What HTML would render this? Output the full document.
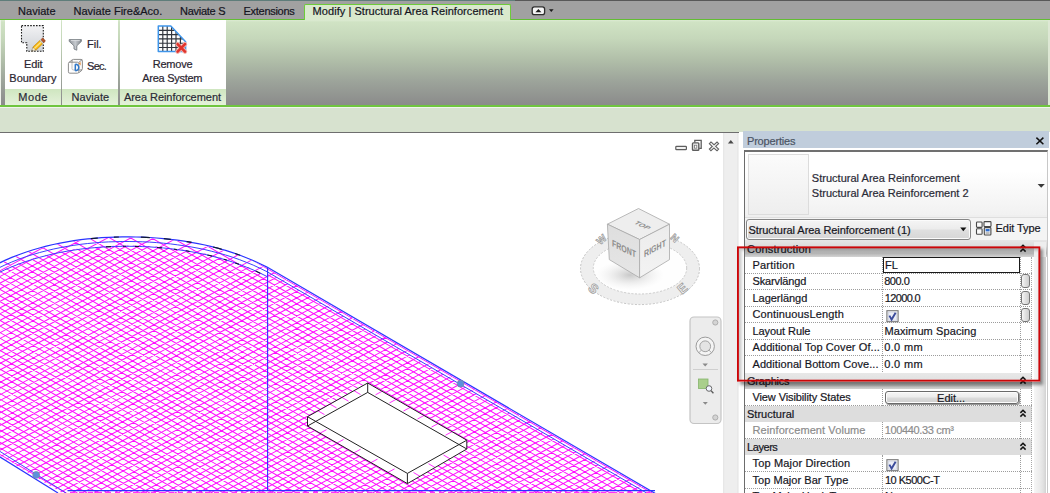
<!DOCTYPE html>
<html><head><meta charset="utf-8"><title>Revit</title>
<style>
*{box-sizing:border-box;margin:0;padding:0}
html,body{width:1050px;height:493px;overflow:hidden;background:#fff}
body{position:relative;font-family:"Liberation Sans",sans-serif;font-size:11px;color:#1e1e2a}
.a{position:absolute}
.t{position:absolute;white-space:nowrap;line-height:14px;height:14px;-webkit-text-stroke:0.2px currentColor}
/* ribbon */
#topline{left:0;top:0;width:1050px;height:1px;background:#5f7d7a}
#tabbar{left:0;top:1px;width:1050px;height:18px;background:#a1a1a1}
#gline{left:0;top:19px;width:1050px;height:1px;background:#62bd33}
#ribbon{left:0;top:20px;width:1050px;height:86px;background:linear-gradient(#dcead2 0,#d0e3c4 2px,#c5d7ba 22%,#b1bfa9 46%,#9ca39a 72%,#8a8a8a 100%)}
#gline2{left:0;top:105px;width:1050px;height:1.5px;background:#6fc53f}
#strip{left:0;top:106.5px;width:1050px;height:25px;background:linear-gradient(#f0f4ec 0,#f0f4ec 1.4px,#d7e2cf 1.4px)}
#dline{left:0;top:131.5px;width:738.6px;height:1.5px;background:#6e6e6e}
.panel{position:absolute;top:20px;height:85px;background:#fff}
.plabel{position:absolute;left:0;right:0;top:69px;height:16px;background:linear-gradient(#cfe6c0,#e4f1da);text-align:center;line-height:15px;color:#2b2b3a}
.tab{position:absolute;top:3px;line-height:14px;white-space:nowrap;color:#15151f}
#acttab{left:304.2px;top:3.5px;width:207.3px;height:16.5px;background:#d9e9cd;border:1px solid #6ecb3a;border-bottom:none;border-radius:2px 2px 0 0}
/* props */
#ptitle{left:743px;top:131.2px;width:306px;height:16.6px;background:#c0cddc}
#pbody{left:743.9px;top:149.5px;width:304.1px;height:343px;background:#fff;border-top:2px solid #707070;border-right:1.5px solid #c8c8c8}
.hdr{position:absolute;left:745px;width:286px;height:16.4px;background:#dcdcdc}
.rowl{position:absolute;left:745px;width:286px;height:0;border-top:1px dotted #b0b0b0}
.lab{left:753px}
.val{left:885px}
.sec{left:748px}
.chev{position:absolute;left:1020px;width:8px;height:9px}
</style></head><body>
<!-- ribbon -->
<div class="a" id="tabbar"></div>
<div class="a" id="topline"></div>
<div class="a" id="ribbon"></div>
<div class="a" id="gline"></div>
<div class="a" id="acttab"></div>
<div class="a" style="left:0;top:20px;width:1.2px;height:86px;background:#eef2ea"></div>
<div class="panel" style="left:4.6px;width:56px"><div class="plabel"></div></div>
<div class="panel" style="left:62.2px;width:56.3px"><div class="plabel"></div></div>
<div class="panel" style="left:119.6px;width:106px"><div class="plabel"></div></div>
<div class="a" id="rstrip" style="left:1048.3px;top:20px;width:1.7px;height:86px;background:#dde8d4"></div>
<div class="a" style="left:515px;top:0;width:535px;height:1.3px;background:#585858"></div>
<div class="a" id="gline2"></div>
<div class="a" id="strip"></div>
<div class="a" id="dline"></div>
<div class="t" style="left:18.0px;top:3.8px;font-size:11px;letter-spacing:0.05px;color:#14141e">Naviate</div>
<div class="t" style="left:73.5px;top:3.8px;font-size:11px;letter-spacing:0.01px;color:#14141e">Naviate Fire&amp;Aco.</div>
<div class="t" style="left:180.1px;top:3.8px;font-size:11px;letter-spacing:-0.28px;color:#14141e">Naviate S</div>
<div class="t" style="left:243.5px;top:3.8px;font-size:11px;letter-spacing:-0.28px;color:#14141e">Extensions</div>
<div class="t" style="left:312.6px;top:4.0px;font-size:11px;letter-spacing:0.05px;color:#14141e">Modify | Structural Area Reinforcement</div>
<div class="t" style="left:23.9px;top:56.8px;font-size:11px;letter-spacing:-0.09px;color:#2a2530">Edit</div>
<div class="t" style="left:9.3px;top:70.8px;font-size:11px;letter-spacing:0.00px;color:#2a2530">Boundary</div>
<div class="t" style="left:18.2px;top:90.0px;font-size:11px;letter-spacing:0.59px;color:#2a2a36">Mode</div>
<div class="t" style="left:87.1px;top:37.4px;font-size:11px;letter-spacing:-0.06px;color:#2a2530">Fil.</div>
<div class="t" style="left:87.1px;top:59.0px;font-size:11px;letter-spacing:-0.74px;color:#2a2530">Sec.</div>
<div class="t" style="left:71.5px;top:90.0px;font-size:11px;letter-spacing:0.07px;color:#2a2a36">Naviate</div>
<div class="t" style="left:152.7px;top:57.1px;font-size:11px;letter-spacing:-0.19px;color:#2a2530">Remove</div>
<div class="t" style="left:142.2px;top:70.7px;font-size:11px;letter-spacing:-0.27px;color:#2a2530">Area System</div>
<div class="t" style="left:123.9px;top:89.9px;font-size:11px;letter-spacing:-0.04px;color:#2a2a36">Area Reinforcement</div>
<svg class="a" style="left:0;top:0" width="560" height="110" viewBox="0 0 560 110">
<defs>
<linearGradient id="eb" x1="0" y1="0" x2="0" y2="1"><stop offset="0" stop-color="#f2f2f4"/><stop offset="1" stop-color="#cfd3d8"/></linearGradient>
<linearGradient id="fn" x1="0" y1="0" x2="1" y2="0"><stop offset="0" stop-color="#8b9096"/><stop offset="0.5" stop-color="#c6cacf"/><stop offset="1" stop-color="#7e848a"/></linearGradient>
<clipPath id="gridc"><path d="M158.3 26.1H170.8L185.6 41.8V51.4H158.3Z"/></clipPath>
</defs>
<!-- Edit boundary -->
<path d="M21.5 25.6H43.3V51.3H26.8V42.7H21.5Z" fill="url(#eb)" stroke="#1c1c1c" stroke-width="1.1" stroke-dasharray="1.6 1.3"/>
<g transform="translate(31.4 51.5) rotate(-43.5)">
<path d="M0 0L4.2 -2.2V2.2Z" fill="#f3e9d2" stroke="#8a7a5a" stroke-width="0.5"/>
<path d="M0 0L1.6 -0.85V0.85Z" fill="#444"/>
<rect x="4.2" y="-2.2" width="9.4" height="4.4" fill="#f6b511" stroke="#b87a08" stroke-width="0.5"/>
<rect x="4.2" y="-0.9" width="9.4" height="1.5" fill="#ffe27a"/>
<rect x="13.6" y="-2.2" width="1.4" height="4.4" fill="#c9c9c9"/>
<rect x="15" y="-2.2" width="2.6" height="4.4" rx="0.9" fill="#b8562a" stroke="#7c3616" stroke-width="0.4"/>
</g>
<!-- funnel -->
<path d="M69.2 39.6H81.4V41.4L76.8 45.8V50.2L74 49V45.8L69.2 41.4Z" fill="url(#fn)" stroke="#7d8288" stroke-width="0.9" stroke-linejoin="round"/>
<path d="M70.8 40.6H79.8" stroke="#dfe2e5" stroke-width="0.9"/>
<!-- section box -->
<g fill="none" stroke="#8c8c8c" stroke-width="1">
<rect x="72" y="59.4" width="10.4" height="10.6" rx="1.4" fill="#fafafa"/>
<rect x="68.4" y="62.2" width="10.4" height="11" rx="1.4" fill="#fdfdfd" fill-opacity="0.45"/>
<path d="M68.8 62.6l3.4-2.8M78.8 62.4l3.4-2.8M78.8 72.8l3.4-2.8"/>
</g>
<path d="M75.3 64.2v6.6M75.3 64.4c4.6-0.6 4.6 6.8 0 6.2" stroke="#2f77c8" stroke-width="1.5" fill="none"/>
<path d="M78.6 63.2l2-1.2v3.6z" fill="#e58a3a"/>
<!-- remove area system -->
<path d="M158.3 26.1H170.8L185.6 41.8V51.4H158.3Z" fill="#fdfdfd"/>
<g clip-path="url(#gridc)" stroke="#30343c" stroke-width="1.15">
<path d="M162.8 25V52M167.2 25V52M171.6 25V52M176 25V52M180.4 25V52M157 30.3H187M157 34.6H187M157 38.9H187M157 43.2H187M157 47.5H187"/>
</g>
<path d="M158.3 26.1H170.8L185.6 41.8V51.4H158.3Z" fill="none" stroke="#3f95ea" stroke-width="1.5" stroke-linejoin="round"/>
<path d="M177.6 44.2l7.4 7.4M185 44.2l-7.4 7.4" stroke="#f4b0a8" stroke-width="4.4" stroke-linecap="round"/>
<path d="M177.6 44.2l7.4 7.4M185 44.2l-7.4 7.4" stroke="#e0332c" stroke-width="2.6" stroke-linecap="round"/>
<!-- tab expander icon -->
<rect x="532.2" y="6.8" width="12.4" height="7.8" rx="2.2" fill="#f4f4f4" stroke="#2e2e2e" stroke-width="1.3"/>
<path d="M535.4 12.2l3-3.2 3 3.2z" fill="#1a1a1a"/>
<path d="M549 9.2h4.6l-2.3 2.8z" fill="#1a1a1a"/>
</svg>

<!-- canvas -->
<svg class="a" style="left:0;top:0" width="742" height="493" viewBox="0 0 742 493">
<clipPath id="slabA"><path d="M-2.0 264.5L4.9 261.2L11.8 258.2L18.7 255.5L25.6 253.0L32.5 250.8L39.4 248.8L46.3 247.0L53.2 245.3L60.1 243.9L67.0 242.6L73.9 241.5L80.8 240.5L87.7 239.7L94.6 239.1L101.5 238.5L108.4 238.1L115.3 237.9L122.2 237.7L129.1 237.7L135.9 237.8L142.8 238.0L149.7 238.3L156.6 238.8L163.5 239.4L170.4 240.1L177.3 241.0L184.2 242.0L191.1 243.1L198.0 244.4L204.9 245.8L211.8 247.5L218.7 249.3L225.6 251.2L232.5 253.4L239.4 255.8L246.3 258.5L253.2 261.3L260.1 264.5L267.0 267.9L760.0 555.3L760.0 500.0L62.0 493.0L-2.0 454.6Z"/></clipPath>
<clipPath id="slabB"><path d="M-2.0 272.3L4.9 269.0L11.8 266.0L18.7 263.3L25.6 260.8L32.5 258.6L39.4 256.6L46.3 254.8L53.2 253.1L60.1 251.7L67.0 250.4L73.9 249.3L80.8 248.3L87.7 247.5L94.6 246.9L101.5 246.3L108.4 245.9L115.3 245.7L122.2 245.5L129.1 245.5L135.9 245.6L142.8 245.8L149.7 246.1L156.6 246.6L163.5 247.2L170.4 247.9L177.3 248.8L184.2 249.8L191.1 250.9L198.0 252.2L204.9 253.6L211.8 255.3L218.7 257.1L225.6 259.0L232.5 261.2L239.4 263.6L246.3 266.3L253.2 269.1L260.1 272.3L267.0 275.7L267.0 271.7L760.0 559.1L760.0 500.0L62.0 493.0L-2.0 454.6Z"/></clipPath>
<g clip-path="url(#slabA)"><path d="M-5 -182.8L670 210.7M-5 -170.6L670 222.9M-5 -158.4L670 235.1M-5 -146.2L670 247.3M-5 -134.0L670 259.5M-5 -121.8L670 271.7M-5 -109.6L670 283.9M-5 -97.4L670 296.1M-5 -85.2L670 308.3M-5 -73.0L670 320.5M-5 -60.8L670 332.7M-5 -48.6L670 344.9M-5 -36.4L670 357.1M-5 -24.2L670 369.3M-5 -12.0L670 381.5M-5 0.2L670 393.7M-5 12.4L670 405.9M-5 24.6L670 418.1M-5 36.8L670 430.3M-5 49.0L670 442.5M-5 61.2L670 454.7M-5 73.4L670 466.9M-5 85.6L670 479.1M-5 97.8L670 491.3M-5 110.0L670 503.5M-5 122.2L670 515.7M-5 134.4L670 527.9M-5 146.6L670 540.1M-5 158.8L670 552.3M-5 171.0L670 564.5M-5 183.2L670 576.7M-5 195.4L670 588.9M-5 207.6L670 601.1M-5 219.8L670 613.3M-5 232.0L670 625.5M-5 244.2L670 637.7M-5 256.4L670 649.9M-5 268.6L670 662.1M-5 280.8L670 674.3M-5 293.0L670 686.5M-5 305.2L670 698.7M-5 317.4L670 710.9M-5 329.6L670 723.1M-5 341.8L670 735.3M-5 354.0L670 747.5M-5 366.2L670 759.7M-5 378.4L670 771.9M-5 390.6L670 784.1M-5 402.8L670 796.3M-5 415.0L670 808.5M-5 427.2L670 820.7M-5 439.4L670 832.9M-5 451.6L670 845.1M-5 463.8L670 857.3M-5 476.0L670 869.5M-5 488.2L670 881.7M-5 500.4L670 893.9M-5 211.4L670 -149.8M-5 223.8L670 -137.4M-5 236.2L670 -125.0M-5 248.6L670 -112.6M-5 261.0L670 -100.2M-5 273.4L670 -87.8M-5 285.8L670 -75.4M-5 298.2L670 -63.0M-5 310.6L670 -50.6M-5 323.0L670 -38.2M-5 335.4L670 -25.8M-5 347.8L670 -13.4M-5 360.2L670 -1.0M-5 372.6L670 11.4M-5 385.0L670 23.8M-5 397.4L670 36.2M-5 409.8L670 48.6M-5 422.2L670 61.0M-5 434.6L670 73.4M-5 447.0L670 85.8M-5 459.4L670 98.2M-5 471.8L670 110.6M-5 484.2L670 123.0M-5 496.6L670 135.4M-5 509.0L670 147.8M-5 521.4L670 160.2M-5 533.8L670 172.6M-5 546.2L670 185.0M-5 558.6L670 197.4M-5 571.0L670 209.8M-5 583.4L670 222.2M-5 595.8L670 234.6M-5 608.2L670 247.0M-5 620.6L670 259.4M-5 633.0L670 271.8M-5 645.4L670 284.2M-5 657.8L670 296.6M-5 670.2L670 309.0M-5 682.6L670 321.4M-5 695.0L670 333.8M-5 707.4L670 346.2M-5 719.8L670 358.6M-5 732.2L670 371.0M-5 744.6L670 383.4M-5 757.0L670 395.8M-5 769.4L670 408.2M-5 781.8L670 420.6M-5 794.2L670 433.0M-5 806.6L670 445.4M-5 819.0L670 457.8M-5 831.4L670 470.2M-5 843.8L670 482.6M-5 856.2L670 495.0" stroke="#ff10ff" stroke-width="1.02" fill="none"/></g>
<g clip-path="url(#slabB)"><path d="M-5 -189.3L670 204.3M-5 -177.1L670 216.5M-5 -164.9L670 228.7M-5 -152.7L670 240.9M-5 -140.5L670 253.1M-5 -128.3L670 265.3M-5 -116.1L670 277.5M-5 -103.9L670 289.7M-5 -91.7L670 301.9M-5 -79.5L670 314.1M-5 -67.3L670 326.3M-5 -55.1L670 338.5M-5 -42.9L670 350.7M-5 -30.7L670 362.9M-5 -18.5L670 375.1M-5 -6.3L670 387.3M-5 5.9L670 399.5M-5 18.1L670 411.7M-5 30.3L670 423.9M-5 42.5L670 436.1M-5 54.7L670 448.3M-5 66.9L670 460.5M-5 79.1L670 472.7M-5 91.3L670 484.9M-5 103.5L670 497.1M-5 115.7L670 509.3M-5 127.9L670 521.5M-5 140.1L670 533.7M-5 152.3L670 545.9M-5 164.5L670 558.1M-5 176.7L670 570.3M-5 188.9L670 582.5M-5 201.1L670 594.7M-5 213.3L670 606.9M-5 225.5L670 619.1M-5 237.7L670 631.3M-5 249.9L670 643.5M-5 262.1L670 655.7M-5 274.3L670 667.9M-5 286.5L670 680.1M-5 298.7L670 692.3M-5 310.9L670 704.5M-5 323.1L670 716.7M-5 335.3L670 728.9M-5 347.5L670 741.1M-5 359.7L670 753.3M-5 371.9L670 765.5M-5 384.1L670 777.7M-5 396.3L670 789.9M-5 408.5L670 802.1M-5 420.7L670 814.3M-5 432.9L670 826.5M-5 445.1L670 838.7M-5 457.3L670 850.9M-5 469.5L670 863.1M-5 481.7L670 875.3M-5 493.9L670 887.5M-5 506.1L670 899.7M-5 204.8L670 -156.4M-5 217.2L670 -144.0M-5 229.6L670 -131.6M-5 242.0L670 -119.2M-5 254.4L670 -106.8M-5 266.8L670 -94.4M-5 279.2L670 -82.0M-5 291.6L670 -69.6M-5 304.0L670 -57.2M-5 316.4L670 -44.8M-5 328.8L670 -32.4M-5 341.2L670 -20.0M-5 353.6L670 -7.6M-5 366.0L670 4.8M-5 378.4L670 17.2M-5 390.8L670 29.6M-5 403.2L670 42.0M-5 415.6L670 54.4M-5 428.0L670 66.8M-5 440.4L670 79.2M-5 452.8L670 91.6M-5 465.2L670 104.0M-5 477.6L670 116.4M-5 490.0L670 128.8M-5 502.4L670 141.2M-5 514.8L670 153.6M-5 527.2L670 166.0M-5 539.6L670 178.4M-5 552.0L670 190.8M-5 564.4L670 203.2M-5 576.8L670 215.6M-5 589.2L670 228.0M-5 601.6L670 240.4M-5 614.0L670 252.8M-5 626.4L670 265.2M-5 638.8L670 277.6M-5 651.2L670 290.0M-5 663.6L670 302.4M-5 676.0L670 314.8M-5 688.4L670 327.2M-5 700.8L670 339.6M-5 713.2L670 352.0M-5 725.6L670 364.4M-5 738.0L670 376.8M-5 750.4L670 389.2M-5 762.8L670 401.6M-5 775.2L670 414.0M-5 787.6L670 426.4M-5 800.0L670 438.8M-5 812.4L670 451.2M-5 824.8L670 463.6M-5 837.2L670 476.0M-5 849.6L670 488.4M-5 862.0L670 500.8" stroke="#ff10ff" stroke-width="1.02" fill="none"/></g>
<path d="M-2.0 263.7L4.9 260.4L11.8 257.4L18.7 254.7L25.6 252.2L32.5 250.0L39.4 248.0L46.3 246.2L53.2 244.5L60.1 243.1L67.0 241.8L73.9 240.7L80.8 239.7L87.7 238.9L94.6 238.3L101.5 237.7L108.4 237.3L115.3 237.1L122.2 236.9L129.1 236.9L135.9 237.0L142.8 237.2L149.7 237.5L156.6 238.0L163.5 238.6L170.4 239.3L177.3 240.2L184.2 241.2L191.1 242.3L198.0 243.6L204.9 245.0L211.8 246.7L218.7 248.5L225.6 250.4L232.5 252.6L239.4 255.0L246.3 257.7L253.2 260.5L260.1 263.7L267.0 267.1L760.0 554.5" stroke="#2a34ff" stroke-width="1.2" fill="none"/>
<path d="M-2.0 268.3L4.9 265.0L11.8 262.0L18.7 259.3L25.6 256.8L32.5 254.6L39.4 252.6L46.3 250.8L53.2 249.1L60.1 247.7L67.0 246.4L73.9 245.3L80.8 244.3L87.7 243.5L94.6 242.9L101.5 242.3L108.4 241.9L115.3 241.7L122.2 241.5L129.1 241.5L135.9 241.6L142.8 241.8L149.7 242.1L156.6 242.6L163.5 243.2L170.4 243.9L177.3 244.8L184.2 245.8L191.1 246.9L198.0 248.2L204.9 249.6L211.8 251.3L218.7 253.1L225.6 255.0L232.5 257.2L239.4 259.6L246.3 262.3L253.2 265.1L260.1 268.3L267.0 271.7L760.0 559.1" stroke="#3a40ff" stroke-width="1" fill="none"/>
<path d="M-2.0 273.1L4.9 269.8L11.8 266.8L18.7 264.1L25.6 261.6L32.5 259.4L39.4 257.4L46.3 255.6L53.2 253.9L60.1 252.5L67.0 251.2L73.9 250.1L80.8 249.1L87.7 248.3L94.6 247.7L101.5 247.1L108.4 246.7L115.3 246.5L122.2 246.3L129.1 246.3L135.9 246.4L142.8 246.6L149.7 246.9L156.6 247.4L163.5 248.0L170.4 248.7L177.3 249.6L184.2 250.6L191.1 251.7L198.0 253.0L204.9 254.4L211.8 256.1L218.7 257.9L225.6 259.8L232.5 262.0L239.4 264.4L246.3 267.1L253.2 269.9L260.1 273.1L267.0 276.5" stroke="#3a40ff" stroke-width="1" fill="none"/>
<path d="M80.0 239.8L85.5 239.2L91.0 238.6L96.6 238.1L102.1 237.7L107.6 237.4L113.1 237.1L118.6 237.0L124.1 236.9L129.7 236.9L135.2 237.0L140.7 237.1L146.2 237.4L151.7 237.7L157.2 238.1L162.8 238.5L168.3 239.1L173.8 239.7L179.3 240.4L184.8 241.3L190.3 242.2L195.9 243.2L201.4 244.3L206.9 245.5L212.4 246.8L217.9 248.2L223.4 249.8L229.0 251.5L234.5 253.3L240.0 255.3" stroke="#101a30" stroke-width="1.2" fill="none" stroke-dasharray="7 16 5 22 9 14" stroke-dashoffset="-84"/>
<path d="M100.0 247.2L105.7 246.9L111.4 246.6L117.2 246.4L122.9 246.3L128.6 246.3L134.3 246.4L140.1 246.5L145.8 246.7L151.5 247.1L157.2 247.5L163.0 247.9L168.7 248.5L174.4 249.2L180.1 250.0L185.9 250.8L191.6 251.8L197.3 252.8L203.0 254.0L208.8 255.3L214.5 256.7L220.2 258.3L225.9 259.9L231.7 261.7L237.4 263.7L243.1 265.8L248.8 268.1L254.6 270.5L260.3 273.2L266.0 276.0" stroke="#101a30" stroke-width="1.1" fill="none" stroke-dasharray="5 12 3 9 4 18" stroke-dashoffset="-6"/><!-- left-bottom edges -->
<path d="M-2 455.8L58 493" stroke="#2a34ff" stroke-width="1.2" fill="none"/>
<path d="M-2 450.2L66 493" stroke="#4a40ff" stroke-width="1" fill="none"/>
<!-- bottom line -->
<path d="M67.5 490.6H655" stroke="#2a34ff" stroke-width="1.3" fill="none"/>
<path d="M70 492.4H650" stroke="#ff30ff" stroke-width="1.2" stroke-dasharray="5 4" fill="none"/>
<!-- vertical line -->
<path d="M267.6 267.5V491" stroke="#2a34ff" stroke-width="1.1" fill="none"/>
<!-- hole -->
<polygon points="307.5,416.7 367.7,383 466.8,440.2 466.8,449 407.4,483.6 307.5,426" fill="#fff"/>
<g stroke="#ff30ff" stroke-width="1" fill="none">
<path d="M318.0 410.8l6.5 3.8M330.0 404.1l6.5 3.8M342.0 397.4l6.5 3.8M354.0 390.7l6.5 3.8M382.0 391.3l-6.5 3.5M396.0 399.4l-6.5 3.5M410.0 407.5l-6.5 3.5M424.0 415.5l-6.5 3.5M438.0 423.6l-6.5 3.5M452.0 431.7l-6.5 3.5M320.0 433.2l6.5-3.5M337.0 443.0l6.5-3.5M354.0 452.8l6.5-3.5M371.0 462.6l6.5-3.5M388.0 472.4l6.5-3.5M420.0 476.3l-6.5-3.8M435.0 467.5l-6.5-3.8M450.0 458.8l-6.5-3.8"/>
</g>
<g stroke="#222" stroke-width="1" fill="none" stroke-linejoin="round">
<path d="M307.5 416.7L367.7 383L466.8 440.2L407.4 473.4Z"/>
<path d="M307.5 416.7V426L407.4 483.6L466.8 449V440.2"/>
<path d="M407.4 473.4V483.6"/>
<path d="M367.7 383V392.4L307.5 426M367.7 392.4L466.8 449"/>
</g>
<!-- handles -->
<circle cx="36.2" cy="474.9" r="3.4" fill="#5b90dc" stroke="#7a8aa8" stroke-width="0.8"/>
<circle cx="460.6" cy="383.7" r="3.4" fill="#5b90dc" stroke="#7a8aa8" stroke-width="0.8"/>

<!-- canvas top border & scrollbar -->
<rect x="723" y="133" width="15.6" height="360" fill="#e7e7e7"/>
<rect x="724.4" y="133" width="12.8" height="360" fill="#eeeeee"/>
<path d="M727.9 143.6l2.9-3.6 2.9 3.6z" fill="#4a4a4a"/>
<!-- window controls -->
<g fill="none">
<rect x="675.8" y="146.3" width="10.6" height="3.4" rx="0.8" fill="#f2f2f2" stroke="#5e5e5e" stroke-width="1.2"/>
<path d="M694.8 142.6v-2.2h6.4v8h-2" stroke="#5e5e5e" stroke-width="1.3"/>
<rect x="692.5" y="142.9" width="6.3" height="7.4" rx="0.8" fill="#f4f4f4" stroke="#5e5e5e" stroke-width="1.4"/>
<rect x="694.6" y="145.2" width="2.2" height="3" fill="#fff" stroke="#777" stroke-width="0.8"/>
<path d="M711 143.6l6 5.6M717 143.6l-6 5.6" stroke-width="3.4" stroke="#5e5e5e" stroke-linecap="square"/>
<path d="M711 143.6l6 5.6M717 143.6l-6 5.6" stroke-width="1.3" stroke="#f4f4f4" stroke-linecap="square"/>
</g>
<!-- view cube -->
<defs>
<linearGradient id="cf" x1="0" y1="0" x2="0" y2="1"><stop offset="0" stop-color="#dedede"/><stop offset="1" stop-color="#e6e6e6"/></linearGradient>
<linearGradient id="cr" x1="0" y1="0" x2="0" y2="1"><stop offset="0" stop-color="#ececec"/><stop offset="1" stop-color="#f3f3f3"/></linearGradient>
<radialGradient id="sh" cx="0.5" cy="0.5" r="0.5"><stop offset="0" stop-color="#c8c8c8"/><stop offset="1" stop-color="#ececec" stop-opacity="0"/></radialGradient>
</defs>
<ellipse cx="640" cy="268.6" rx="59.5" ry="36" fill="#eeeeee" stroke="#bdbdbd" stroke-width="0.9" stroke-dasharray="2 1.6"/>
<ellipse cx="640" cy="268" rx="46.7" ry="26" fill="#fefefe" stroke="#c6c6c6" stroke-width="0.9" stroke-dasharray="2 1.6"/>
<ellipse cx="630" cy="275" rx="34" ry="15" fill="url(#sh)"/>
<g font-family="Liberation Sans,sans-serif" font-weight="bold" font-size="12" fill="#f4f4f4" stroke="#9a9a9a" stroke-width="0.7" text-anchor="middle">
<text x="593.5" y="293" transform="rotate(40 593.5 288.5)" font-size="13">S</text>
<text x="682.5" y="293" transform="rotate(-40 682.5 288.5)" font-size="13">E</text>
<text x="601.5" y="243" transform="rotate(-42 601.5 239.5)" font-size="10">W</text>
<text x="674.5" y="241.5" transform="rotate(42 674.5 238.5)" font-size="10">N</text>
</g>
<polygon points="607.4,224.2 638.5,208.5 669.5,224.2 639.6,239.5" fill="#eeeeee" stroke="#a8a8a8" stroke-width="0.8"/>
<polygon points="607.4,224.2 639.6,239.5 639.6,277.8 609.3,259.6" fill="url(#cf)" stroke="#a8a8a8" stroke-width="0.8"/>
<polygon points="639.6,239.5 669.5,224.2 669.5,259.6 639.6,277.8" fill="url(#cr)" stroke="#a8a8a8" stroke-width="0.8"/>
<g font-family="Liberation Sans,sans-serif" font-weight="bold" fill="#8d8d8d" text-anchor="middle">
<text font-size="9.5" transform="matrix(0.74 0.36 0 1 624 252)" x="0" y="0">FRONT</text>
<text font-size="9.5" transform="matrix(0.74 -0.4 0 1 655 251.5)" x="0" y="0">RIGHT</text>
<text font-size="8.5" transform="matrix(0.8 0.38 -0.7 0.42 640.5 226.5)" x="0" y="0">TOP</text>
</g>
<!-- nav bar -->
<rect x="690" y="317" width="31" height="106.5" rx="4" fill="#ececec" stroke="#c4c4c4" stroke-width="1.2"/>
<circle cx="715.3" cy="322.5" r="2.6" fill="#d4d4d4" stroke="#a8a8a8" stroke-width="0.9"/>
<circle cx="715.3" cy="417.5" r="2.6" fill="#d4d4d4" stroke="#a8a8a8" stroke-width="0.9"/>
<circle cx="705.2" cy="346.3" r="9.2" fill="#f4f4f4" stroke="#9c9c9c" stroke-width="1"/>
<circle cx="705.2" cy="346.3" r="5.4" fill="#e4e4e4" stroke="#a2a2a2" stroke-width="1"/>
<path d="M698.5 353l3-3M711.8 353l-3-3" stroke="#a2a2a2" stroke-width="0.9"/>
<path d="M702.5 363.5h5.4l-2.7 3z" fill="#8a8a8a"/>
<path d="M693 369.5h25" stroke="#cfcfcf" stroke-width="1"/>
<rect x="698.5" y="379" width="9.5" height="9.5" fill="#a9cf8c" stroke="#86b46c" stroke-width="0.8"/>
<circle cx="709" cy="388.5" r="2.8" fill="#f2f6ff" stroke="#6a6a6a" stroke-width="1"/>
<path d="M711 390.6l2.4 2.6" stroke="#5a5a5a" stroke-width="1.4"/>
<path d="M702.8 402h5l-2.5 2.8z" fill="#8a8a8a"/>

</svg>
<!-- properties -->
<div class="a" id="ptitle"></div>
<div class="a" id="pbody"></div>
<div class="a" style="left:743.7px;top:149.5px;width:1.8px;height:343.5px;background:#6c6c6c"></div>
<div class="a" style="left:745px;top:152px;width:301.5px;height:63px;background:linear-gradient(#ffffff 30%,#f1f1f1 100%)"></div>
<div class="a" style="left:748px;top:154px;width:60.5px;height:60.5px;background:linear-gradient(#fbfbfb,#eeeeee);border:1px solid #dcdcdc"></div>
<svg class="a" style="left:1036px;top:183px" width="10" height="6" viewBox="0 0 10 6"><path d="M1.6 1h7.2L5.2 4.8z" fill="#3a3a3a"/></svg>
<div class="a" style="left:745px;top:215px;width:301.5px;height:27px;background:linear-gradient(#efefef 0,#efefef 2px,#dedede 2px,#dedede 3px,#f4f4f4 3px)"></div>
<div class="a" style="left:745.8px;top:219px;width:225px;height:21px;border:1px solid #858585;border-radius:3px;background:linear-gradient(#f5f5f5 0%,#ececec 45%,#dfdfdf 55%,#d6d6d6 100%);box-shadow:inset 0 0 0 1px #fbfbfb"></div>
<svg class="a" style="left:958px;top:226px" width="10" height="7" viewBox="0 0 10 7"><path d="M2.2 1.4h6.2L5.3 5.2z" fill="#111"/></svg>
<svg class="a" style="left:974px;top:219px" width="20" height="18" viewBox="0 0 20 18"><g fill="#fafafa" stroke="#484848" stroke-width="1.1">
<rect x="2.5" y="3" width="5.6" height="5.4" rx="0.8"/><rect x="2.5" y="9.8" width="5.6" height="5.4" rx="0.8"/><rect x="10" y="2.6" width="7" height="5" rx="0.8"/><rect x="10.3" y="8.6" width="6.6" height="7.4" rx="0.8"/></g>
<rect x="11.6" y="10" width="4" height="2.4" fill="#2f6fd0"/><path d="M11.6 14h4" stroke="#777" stroke-width="0.9"/></svg>
<div class="a" style="left:745px;top:240px;width:301.5px;height:16.65px;background:linear-gradient(#e6e6e6 0%,#dcdcdc 36%,#c9c9c9 52%,#b4b4b4 78%,#d4d4d4 100%)"></div>
<div class="a" style="left:745px;top:372.50px;width:286.5px;height:16.55px;background:linear-gradient(#e8e8e8 0%,#e2e2e2 42%,#c8c8c8 56%,#b8b8b8 78%,#d2d2d2 100%)"></div>
<div class="a" style="left:745px;top:405.60px;width:286.5px;height:16.55px;background:#dddddd"></div>
<div class="a" style="left:745px;top:438.70px;width:286.5px;height:16.55px;background:#dddddd"></div>
<div class="a" style="left:745px;top:272.70px;width:286.5px;height:0;border-top:1px dotted #9c9c9c"></div>
<div class="a" style="left:745px;top:289.25px;width:286.5px;height:0;border-top:1px dotted #9c9c9c"></div>
<div class="a" style="left:745px;top:305.80px;width:286.5px;height:0;border-top:1px dotted #9c9c9c"></div>
<div class="a" style="left:745px;top:322.35px;width:286.5px;height:0;border-top:1px dotted #9c9c9c"></div>
<div class="a" style="left:745px;top:338.90px;width:286.5px;height:0;border-top:1px dotted #9c9c9c"></div>
<div class="a" style="left:745px;top:355.45px;width:286.5px;height:0;border-top:1px dotted #9c9c9c"></div>
<div class="a" style="left:745px;top:405.10px;width:286.5px;height:0;border-top:1px dotted #9c9c9c"></div>
<div class="a" style="left:745px;top:438.20px;width:286.5px;height:0;border-top:1px dotted #9c9c9c"></div>
<div class="a" style="left:745px;top:471.30px;width:286.5px;height:0;border-top:1px dotted #9c9c9c"></div>
<div class="a" style="left:745px;top:487.85px;width:286.5px;height:0;border-top:1px dotted #9c9c9c"></div>
<div class="a" style="left:882.4px;top:256.65px;width:0;height:115.85px;border-left:1px dotted #9c9c9c"></div>
<div class="a" style="left:1019.9px;top:256.65px;width:0;height:115.85px;border-left:1px dotted #9c9c9c"></div>
<div class="a" style="left:882.4px;top:389.05px;width:0;height:16.55px;border-left:1px dotted #9c9c9c"></div>
<div class="a" style="left:1019.9px;top:389.05px;width:0;height:16.55px;border-left:1px dotted #9c9c9c"></div>
<div class="a" style="left:882.4px;top:422.15px;width:0;height:16.55px;border-left:1px dotted #9c9c9c"></div>
<div class="a" style="left:1019.9px;top:422.15px;width:0;height:16.55px;border-left:1px dotted #9c9c9c"></div>
<div class="a" style="left:882.4px;top:455.25px;width:0;height:49.65px;border-left:1px dotted #9c9c9c"></div>
<div class="a" style="left:1019.9px;top:455.25px;width:0;height:49.65px;border-left:1px dotted #9c9c9c"></div>
<div class="a" style="left:1031.3px;top:256.6px;width:0;height:236.4px;border-left:1px dotted #a8a8a8"></div>
<div class="a" style="left:883.2px;top:257.4px;width:137px;height:15.4px;border:1.4px solid #1a1a1a;background:#fff"></div>
<div class="a" style="left:1021.4px;top:274.40px;width:9px;height:14px;border:1px solid #767676;border-radius:3px;background:linear-gradient(90deg,#f6f6f6,#dedede 55%,#cfcfcf)"></div>
<div class="a" style="left:1021.4px;top:290.95px;width:9px;height:14px;border:1px solid #767676;border-radius:3px;background:linear-gradient(90deg,#f6f6f6,#dedede 55%,#cfcfcf)"></div>
<div class="a" style="left:1021.4px;top:307.50px;width:9px;height:14px;border:1px solid #767676;border-radius:3px;background:linear-gradient(90deg,#f6f6f6,#dedede 55%,#cfcfcf)"></div>
<svg class="a" style="left:885.8px;top:309.90px" width="13" height="13" viewBox="0 0 13 13"><rect x="0.9" y="0.7" width="11.2" height="11" fill="#f6f6f8" stroke="#777" stroke-width="1.1"/><rect x="2.4" y="2.2" width="8.2" height="8" fill="#eceef6" stroke="#d3d6e4" stroke-width="0.8"/><path d="M3.4 5.6L5.6 9.6L9.6 2.8" fill="none" stroke="#3b4b9b" stroke-width="1.9"/></svg>
<svg class="a" style="left:885.8px;top:458.85px" width="13" height="13" viewBox="0 0 13 13"><rect x="0.9" y="0.7" width="11.2" height="11" fill="#f6f6f8" stroke="#777" stroke-width="1.1"/><rect x="2.4" y="2.2" width="8.2" height="8" fill="#eceef6" stroke="#d3d6e4" stroke-width="0.8"/><path d="M3.4 5.6L5.6 9.6L9.6 2.8" fill="none" stroke="#3b4b9b" stroke-width="1.9"/></svg>
<div class="a" style="left:884.6px;top:390.65px;width:134.6px;height:13.8px;border:1px solid #6a6a6a;border-radius:3px;background:linear-gradient(#f6f6f6 0%,#ececec 48%,#dcdcdc 52%,#cecece 100%);box-shadow:inset 0 0 0 1px #fcfcfc,1px 1px 1px rgba(0,0,0,.45)"></div>
<svg class="a" style="left:1017.8px;top:242.70px" width="10" height="11" viewBox="0 0 10 11"><path d="M2.4 4.9L5 2.3L7.6 4.9M2.4 8.6L5 6L7.6 8.6" fill="none" stroke="#111" stroke-width="1.5"/></svg>
<svg class="a" style="left:1017.8px;top:375.48px" width="10" height="11" viewBox="0 0 10 11"><path d="M2.4 4.9L5 2.3L7.6 4.9M2.4 8.6L5 6L7.6 8.6" fill="none" stroke="#111" stroke-width="1.5"/></svg>
<svg class="a" style="left:1017.8px;top:407.98px" width="10" height="11" viewBox="0 0 10 11"><path d="M2.4 4.9L5 2.3L7.6 4.9M2.4 8.6L5 6L7.6 8.6" fill="none" stroke="#111" stroke-width="1.5"/></svg>
<svg class="a" style="left:1017.8px;top:441.07px" width="10" height="11" viewBox="0 0 10 11"><path d="M2.4 4.9L5 2.3L7.6 4.9M2.4 8.6L5 6L7.6 8.6" fill="none" stroke="#111" stroke-width="1.5"/></svg>
<div class="a" style="left:1033.6px;top:242px;width:12.9px;height:251px;background:#eeeeee"></div>
<div class="a" style="left:1033.6px;top:256.6px;width:12.9px;height:236.4px;background:linear-gradient(90deg,#f6f6f6 0%,#ececec 45%,#e2e2e2 75%,#d2d2d2 100%)"></div>
<div class="t" style="left:747.0px;top:134.0px;font-size:11px;letter-spacing:-0.19px;color:#4a5464">Properties</div>
<div class="t" style="left:811.8px;top:171.4px;font-size:11px;letter-spacing:0.02px;color:#2a2a36">Structural Area Reinforcement</div>
<div class="t" style="left:811.8px;top:185.9px;font-size:11px;letter-spacing:0.01px;color:#2a2a36">Structural Area Reinforcement 2</div>
<div class="t" style="left:748.4px;top:222.8px;font-size:11px;letter-spacing:-0.05px;color:#16161e">Structural Area Reinforcement (1)</div>
<div class="t" style="left:995.6px;top:221.2px;font-size:11px;letter-spacing:-0.08px;color:#16161e">Edit Type</div>
<div class="t" style="left:747.0px;top:242.1px;font-size:11px;letter-spacing:0.19px;color:#16161e">Construction</div>
<div class="t" style="left:752.5px;top:257.7px;font-size:11px;letter-spacing:0.21px;color:#16161e">Partition</div>
<div class="t" style="left:885.1px;top:257.7px;font-size:11px;letter-spacing:-0.14px;color:#16161e">FL</div>
<div class="t" style="left:752.5px;top:274.2px;font-size:11px;letter-spacing:-0.13px;color:#16161e">Skarvlängd</div>
<div class="t" style="left:884.2px;top:274.2px;font-size:11px;letter-spacing:-0.48px;color:#16161e">800.0</div>
<div class="t" style="left:752.5px;top:290.8px;font-size:11px;letter-spacing:-0.03px;color:#16161e">Lagerlängd</div>
<div class="t" style="left:884.7px;top:290.8px;font-size:11px;letter-spacing:-0.63px;color:#16161e">12000.0</div>
<div class="t" style="left:752.5px;top:307.3px;font-size:11px;letter-spacing:0.13px;color:#16161e">ContinuousLength</div>
<div class="t" style="left:752.5px;top:323.9px;font-size:11px;letter-spacing:-0.08px;color:#16161e">Layout Rule</div>
<div class="t" style="left:884.5px;top:323.9px;font-size:11px;letter-spacing:0.10px;color:#16161e">Maximum Spacing</div>
<div class="t" style="left:752.5px;top:340.4px;font-size:11px;letter-spacing:0.09px;color:#16161e">Additional Top Cover Of...</div>
<div class="t" style="left:884.2px;top:340.4px;font-size:11px;letter-spacing:0.34px;color:#16161e">0.0 mm</div>
<div class="t" style="left:752.5px;top:357.0px;font-size:11px;letter-spacing:0.08px;color:#16161e">Additional Bottom Cove...</div>
<div class="t" style="left:884.2px;top:357.0px;font-size:11px;letter-spacing:0.34px;color:#16161e">0.0 mm</div>
<div class="t" style="left:747.0px;top:373.5px;font-size:11px;letter-spacing:-0.20px;color:#16161e">Graphics</div>
<div class="t" style="left:752.5px;top:390.1px;font-size:11px;letter-spacing:-0.11px;color:#16161e">View Visibility States</div>
<div class="t" style="left:937.1px;top:390.7px;font-size:11px;letter-spacing:-0.02px;color:#16161e">Edit...</div>
<div class="t" style="left:747.0px;top:406.6px;font-size:11px;letter-spacing:0.02px;color:#16161e">Structural</div>
<div class="t" style="left:752.5px;top:423.2px;font-size:11px;letter-spacing:0.09px;color:#8c8c8c">Reinforcement Volume</div>
<div class="t" style="left:884.7px;top:423.2px;font-size:11px;letter-spacing:-0.34px;color:#8c8c8c">100440.33 cm³</div>
<div class="t" style="left:747.0px;top:439.7px;font-size:11px;letter-spacing:-0.43px;color:#16161e">Layers</div>
<div class="t" style="left:752.5px;top:456.3px;font-size:11px;letter-spacing:0.16px;color:#16161e">Top Major Direction</div>
<div class="t" style="left:752.5px;top:472.8px;font-size:11px;letter-spacing:0.04px;color:#16161e">Top Major Bar Type</div>
<div class="t" style="left:884.9px;top:472.8px;font-size:11px;letter-spacing:-0.48px;color:#16161e">10 K500C-T</div>
<div class="t" style="left:752.5px;top:489.4px;font-size:11px;letter-spacing:-0.20px;color:#16161e">Top Major Hook Type</div>
<div class="t" style="left:884.9px;top:489.4px;font-size:11px;letter-spacing:-0.53px;color:#16161e">None</div>
<svg class="a" style="left:1034px;top:135px" width="12" height="12" viewBox="0 0 12 12"><path d="M2.4 2.6l7 6.6M9.4 2.6l-7 6.6" stroke="#111" stroke-width="1.5"/></svg>
<div class="a" style="left:737px;top:245.9px;height:136.2px;width:303.4px;border:2px solid transparent;box-shadow:3px 3px 3px rgba(0,0,0,.42),inset 2.5px 2.5px 3px rgba(0,0,0,.22)"></div>
<svg class="a" style="left:730px;top:240px" width="320" height="150" viewBox="730 240 320 150"><rect x="737.95" y="247.35" width="301.4" height="133.3" fill="none" stroke="#cc0508" stroke-width="1.9"/></svg>
</body></html>
